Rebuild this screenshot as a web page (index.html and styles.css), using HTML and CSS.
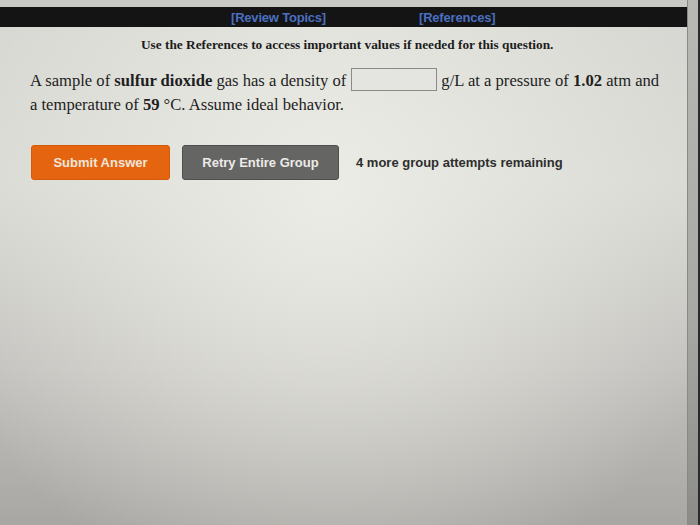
FILE: index.html
```html
<!DOCTYPE html>
<html>
<head>
<meta charset="utf-8">
<link rel="stylesheet" href="styles.css">
</head>
<body>
<div class="screen">
  <div class="page">
    <div class="topstrip"></div>
    <div class="navbar">
      <a class="navlink">[Review Topics]</a>
      <a class="navlink">[References]</a>
    </div>
    <p class="instructions">Use the References to access important values if needed for this question.</p>
    <p class="question">A sample of <b>sulfur dioxide</b> gas has a density of<span class="answer"></span>g/L at a pressure of <b>1.02</b> atm and a temperature of <b>59</b> °C. Assume ideal behavior.</p>
    <div class="actions">
      <button class="btn btn-submit">Submit Answer</button>
      <button class="btn btn-retry">Retry Entire Group</button>
      <span class="attempts">4 more group attempts remaining</span>
    </div>
  </div>
  <div class="edge"></div>
</div>
</body>
</html>
```
FILE: styles.css
```css
html, body {
  margin: 0;
  padding: 0;
  width: 700px;
  height: 525px;
  overflow: hidden;
  background: #1a1a1a;
}
.screen {
  display: flex;
  width: 700px;
  height: 525px;
}
.page {
  flex: 1;
  display: flex;
  flex-direction: column;
  background:
    radial-gradient(ellipse 420px 420px at 330px 190px, rgba(236,236,230,1) 0%, rgba(236,236,230,0) 100%),
    linear-gradient(to bottom, #d4d4d0 0%, #d8d8d3 35%, #c2c1bd 70%, #a8a7a3 100%);
  border-right: 1px solid #8a8986;
}
.edge {
  width: 10px;
  background: linear-gradient(to bottom, #b8b8b4 0%, #a8a8a4 60%, #8c8b88 100%);
  border-right: 2px solid #2a2a2a;
}
.topstrip {
  height: 7px;
  background: #c9c9c5;
}
.navbar {
  height: 20px;
  background: #141414;
  display: flex;
  align-items: center;
  padding-left: 231px;
  gap: 93px;
}
.navlink {
  font-family: "Liberation Sans", Arial, sans-serif;
  font-size: 13px;
  font-weight: bold;
  color: #4a6fc0;
  letter-spacing: -0.2px;
}
.instructions {
  margin: 10px 0 0 0;
  padding-left: 141px;
  font-family: "Liberation Serif", "Times New Roman", serif;
  font-weight: bold;
  font-size: 13.3px;
  color: #1c1c1c;
  line-height: 16px;
}
.question {
  margin: 15px 0 0 0;
  padding-left: 30px;
  width: 634px;
  font-family: "Liberation Serif", "Times New Roman", serif;
  font-size: 16.6px;
  line-height: 24px;
  color: #1e1e1e;
}
.answer {
  display: inline-block;
  width: 84px;
  height: 21px;
  vertical-align: -5px;
  margin: 0 4px 0 5px;
  border: 1px solid #8a8a88;
  background: #e4e4e0;
}
.actions {
  display: flex;
  align-items: center;
  margin: 28px 0 0 31px;
}
.btn {
  font-family: "Liberation Sans", Arial, sans-serif;
  font-size: 13px;
  font-weight: bold;
  height: 35px;
  border-radius: 3px;
  color: #efe6dc;
  padding: 0;
}
.btn-submit {
  width: 139px;
  background: #e5640f;
  border: 1px solid #d45a0a;
}
.btn-retry {
  width: 157px;
  margin-left: 12px;
  background: #656563;
  border: 1px solid #4e4e4c;
  color: #ecebe8;
}
.attempts {
  margin-left: 17px;
  font-family: "Liberation Sans", Arial, sans-serif;
  font-size: 13px;
  font-weight: bold;
  color: #2e2e2e;
}
```
